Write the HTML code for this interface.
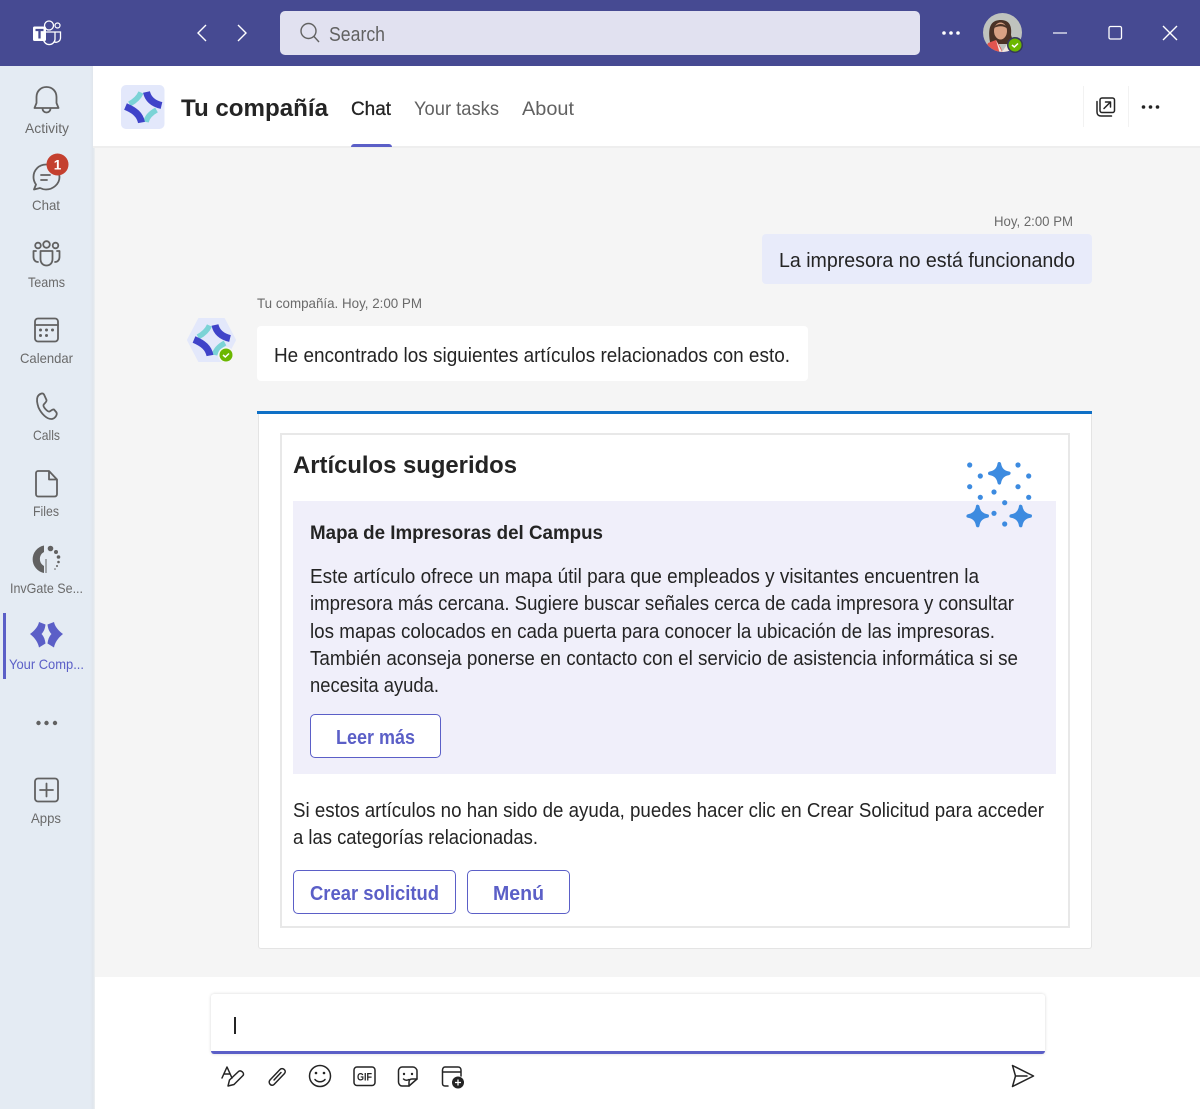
<!DOCTYPE html>
<html lang="es"><head><meta charset="utf-8"><title>Tu compañía</title>
<style>
html,body{margin:0;padding:0;width:1200px;height:1109px;overflow:hidden;background:#f5f5f5}
.b{position:absolute;box-sizing:border-box}
svg{position:absolute;left:0;top:0}
text{font-family:"Liberation Sans",sans-serif;fill:#242424;font-size:20px}
.n{font-size:14px;fill:#6a6a6a;text-anchor:start}
.i{fill:none;stroke:#616161;stroke-width:1.8;stroke-linecap:round;stroke-linejoin:round}
.k{fill:none;stroke:#242424;stroke-width:1.5;stroke-linecap:round;stroke-linejoin:round}
.bb{font-weight:700}
.p{fill:#5b5fc7;font-weight:700}
</style></head><body>
<div class="b" style="left:0;top:66px;width:95px;height:1043px;background:linear-gradient(90deg,#e4ebf3 0,#e4ebf3 90px,#dfe5ec 93px,#eef0f2 95px)"></div>
<div class="b" style="left:93px;top:66px;width:1107px;height:82px;background:#fff;border-bottom:2px solid #eeeeee"></div>
<div class="b" style="left:0;top:0;width:1200px;height:66px;background:#464a92"></div>
<div class="b" style="left:280px;top:11px;width:640px;height:44px;background:#e1e1f0;border-radius:5px"></div>
<div class="b" style="left:351px;top:144px;width:41px;height:3px;background:#5b5fc7;border-radius:3px 3px 0 0"></div>
<div class="b" style="left:762px;top:234px;width:330px;height:50px;background:#e8ebfa;border-radius:4px"></div>
<div class="b" style="left:257px;top:326px;width:551px;height:55px;background:#fff;border-radius:4px"></div>
<div class="b" style="left:258px;top:414px;width:834px;height:535px;background:#fff;border:1px solid #e4e4e4;border-top:0;border-radius:0 0 3px 3px"></div>
<div class="b" style="left:257px;top:411px;width:835px;height:3px;background:#0f70c6"></div>
<div class="b" style="left:280px;top:433px;width:790px;height:495px;background:#fff;border:2px solid #e8e8e8"></div>
<div class="b" style="left:293px;top:501px;width:763px;height:273px;background:#f0effa"></div>
<div class="b" style="left:310px;top:714px;width:131px;height:44px;background:#fff;border:1.5px solid #5b5fc7;border-radius:5px"></div>
<div class="b" style="left:293px;top:870px;width:163px;height:44px;background:#fff;border:1.5px solid #5b5fc7;border-radius:5px"></div>
<div class="b" style="left:467px;top:870px;width:103px;height:44px;background:#fff;border:1.5px solid #5b5fc7;border-radius:5px"></div>
<div class="b" style="left:95px;top:977px;width:1105px;height:132px;background:#fff"></div>
<div class="b" style="left:211px;top:994px;width:834px;height:60px;background:#fff;border-bottom:3px solid #5b5fc7;border-radius:3px;box-shadow:0 0 3px rgba(0,0,0,.16)"></div>
<div class="b" style="left:234px;top:1017px;width:1.6px;height:17px;background:#242424"></div>
<div class="b" style="left:3px;top:613px;width:3px;height:66px;background:#5b5fc7"></div>
<div class="b" style="left:1083px;top:86px;width:1px;height:41px;background:#f2f2f2"></div>
<div class="b" style="left:1128px;top:86px;width:1px;height:41px;background:#f2f2f2"></div>

<svg width="1200" height="1109" viewBox="0 0 1200 1109">
<defs>
<g id="logo" fill="none">
<path d="M20 7.500C18 12 14 16 8.500 19" stroke="#7bd3d6" stroke-width="5.500"/>
<path d="M25 37C26 32 30 28 35.500 25" stroke="#7bd3d6" stroke-width="5.500"/>
<path d="M25.500 7C27 14 32 18.500 40.500 20.500" stroke="#3f43c9" stroke-width="7"/>
<path d="M20.500 37.500C19 30 14 25.500 4.500 21.500" stroke="#3f43c9" stroke-width="7"/>
</g>
<path id="star" d="M0-9.500Q1.200-1.200 9.500 0Q1.200 1.200 0 9.500Q-1.200 1.200-9.500 0Q-1.200-1.200 0-9.500Z" fill="#3d8be0" stroke="#3d8be0" stroke-width="3.600" stroke-linejoin="round"/>
</defs>

<!-- Teams logo -->
<circle cx="49" cy="25.500" r="4.500" fill="none" stroke="#fff" stroke-width="1.300"/>
<circle cx="57.500" cy="25.500" r="2.500" fill="none" stroke="#fff" stroke-width="1.200"/>
<path d="M43.500 32V39.500A5.800 5.800 0 0 0 55 39.500V32ZM55 32H60.500V38A4.500 4.500 0 0 1 54.500 42" fill="none" stroke="#fff" stroke-width="1.300"/>
<rect x="33" y="26.500" width="13" height="14.500" rx="1.500" fill="#fff"/>
<path d="M35.500 30H43.500M39.500 30V38.500" stroke="#464a92" stroke-width="2.300" fill="none"/>

<!-- nav arrows -->
<path d="M206 25L198 33L206 41M238 25L246 33L238 41" fill="none" stroke="#fff" stroke-width="1.400"/>
<!-- search -->
<circle cx="308.500" cy="31" r="7.500" fill="none" stroke="#616161" stroke-width="1.400"/>
<path d="M314 36.500L319 42" stroke="#616161" stroke-width="1.400"/>
<text x="329" y="41" textLength="56" lengthAdjust="spacingAndGlyphs" style="fill:#616161">Search</text>
<!-- top right -->
<g fill="#fff"><circle cx="944" cy="33" r="1.800"/><circle cx="951" cy="33" r="1.800"/><circle cx="958" cy="33" r="1.800"/></g>
<clipPath id="av"><circle cx="1002.500" cy="32.500" r="19.500"/></clipPath>
<g clip-path="url(#av)">
<rect x="983" y="13" width="40" height="40" fill="#bfc3be"/>
<path d="M990 42C987 24 993 20 1001 20C1010 20 1012 27 1011 35L1014 44H990Z" fill="#4a3226"/>
<ellipse cx="1000.500" cy="31" rx="6.500" ry="8.500" fill="#d8a184"/>
<path d="M994 28C996 23 1005 22 1008 29C1003 25 998 26 994 28Z" fill="#4a3226"/>
<path d="M984 54L988 43L996 40L1001 48L1003 54Z" fill="#e2544f"/>
<path d="M996 40L1002 52L1008 43L1012 54H1000Z" fill="#f2e8e2"/>
<path d="M1008 43L1020 44V54H1012Z" fill="#2e2e36"/>
</g>
<circle cx="1015" cy="45" r="8" fill="#36385e"/>
<circle cx="1015" cy="45" r="6.500" fill="#6bb700"/>
<path d="M1012 45L1014.300 47L1018 43.500" fill="none" stroke="#fff" stroke-width="1.500"/>
<path d="M1053 33H1067" stroke="#fff" stroke-width="1.300" opacity=".9"/>
<rect x="1109" y="26.500" width="12.500" height="12.500" rx="1.500" fill="none" stroke="#fff" stroke-width="1.300"/>
<path d="M1163 26L1177 40M1177 26L1163 40" stroke="#fff" stroke-width="1.400"/>

<!-- sidebar -->
<path class="i" d="M47 87C41 87 37 91.500 37 97V103L35 108H59L57 103V97C57 91.500 53 87 47 87ZM43 108.500A4 4 0 0 0 51 108.500" transform="translate(-.5 0)"/>
<text class="n" x="25" y="133" textLength="44" lengthAdjust="spacingAndGlyphs">Activity</text>
<path class="i" d="M46 164.500C39 164.500 33.500 170 33.500 177C33.500 180 34.500 182.500 36 184.500L34 189.500L40 188C42 189 44 189.500 46 189.500C53 189.500 59.500 184 59.500 177C59.500 170 53 164.500 46 164.500Z"/>
<path class="i" d="M41 175H50M41 180H47"/>
<circle cx="57.500" cy="164.500" r="11" fill="#c4402f"/>
<text x="57.500" y="169.500" text-anchor="middle" style="fill:#fff;font-size:13.500px;font-weight:700">1</text>
<text class="n" x="32" y="210" textLength="28" lengthAdjust="spacingAndGlyphs">Chat</text>
<circle class="i" cx="38" cy="245.500" r="2.800"/><circle class="i" cx="46.500" cy="244.500" r="3.300"/><circle class="i" cx="55.500" cy="245.500" r="2.800"/>
<path class="i" d="M40.500 251H52.500V259C52.500 263 50 265.500 46.500 265.500C43 265.500 40.500 263 40.500 259Z"/>
<path class="i" d="M36 251H33.500V257C33.500 260 35.500 262 38 262M57 251H59.500V257C59.500 260 57.500 262 55 262"/>
<text class="n" x="28" y="287" textLength="37" lengthAdjust="spacingAndGlyphs">Teams</text>
<rect class="i" x="35" y="318.500" width="23" height="23" rx="3"/><path class="i" d="M35 325H58"/>
<g fill="#616161"><circle cx="40.500" cy="330" r="1.500"/><circle cx="46.500" cy="330" r="1.500"/><circle cx="52.500" cy="330" r="1.500"/><circle cx="40.500" cy="335.500" r="1.500"/><circle cx="46.500" cy="335.500" r="1.500"/></g>
<text class="n" x="20" y="363" textLength="53" lengthAdjust="spacingAndGlyphs">Calendar</text>
<path class="i" d="M37.500 397C38.500 394.500 42.500 392 44 394.500L46.500 400C47 402 44 403.500 43.500 405C43 407 47.500 412 49.500 411.500C51 411 52 409 54 409.500L56.500 412.500C57.500 415 55 418.500 52 419C47 419.500 41.500 414 38.500 407.500C37 403 36.500 399.500 37.500 397Z"/>
<text class="n" x="33" y="440" textLength="27" lengthAdjust="spacingAndGlyphs">Calls</text>
<path class="i" d="M38 471H49L57 479.500V494C57 495.500 56 496.500 54.500 496.500H38C37 496.500 36 495.500 36 494V473C36 472 37 471 38 471ZM49 471V479.500H57"/>
<text class="n" x="33" y="516" textLength="26" lengthAdjust="spacingAndGlyphs">Files</text>
<path d="M44 545.500A14 14 0 0 0 44 573V566A8 8 0 0 1 44 552Z" fill="#616161"/><path d="M46 559V573" stroke="#616161" stroke-width="1"/>
<g fill="#616161"><circle cx="50.500" cy="548.500" r="2.800"/><circle cx="56" cy="552" r="2"/><circle cx="58.500" cy="557" r="1.800"/><circle cx="58.500" cy="562" r="1.300"/><circle cx="57" cy="566" r="1"/><circle cx="55" cy="569" r=".8"/></g>
<text class="n" x="10" y="593" textLength="73" lengthAdjust="spacingAndGlyphs">InvGate Se...</text>
<path d="M30 634C34 631 38 627 39 622L45.500 624.500C45 629 43.500 632 41.500 634C43.500 636 45 639 45.500 643.500L39 647.500C38 642 34 637 30 634Z" fill="#5b5fc7"/>
<path d="M63 634C59 631 55 627 54 622L47.500 624.500C48 629 49.500 632 51.500 634C49.500 636 48 639 47.500 643.500L54 647.500C55 642 59 637 63 634Z" fill="#5b5fc7"/>
<text class="n" x="9" y="669" textLength="75" lengthAdjust="spacingAndGlyphs" style="fill:#5b5fc7">Your Comp...</text>
<g fill="#616161"><circle cx="38.500" cy="723" r="2.200"/><circle cx="46.500" cy="723" r="2.200"/><circle cx="55" cy="723" r="2.200"/></g>
<rect class="i" x="35" y="778.500" width="23" height="23" rx="3"/><path class="i" d="M46.500 783.500V796.500M40 790H53"/>
<text class="n" x="31" y="823" textLength="30" lengthAdjust="spacingAndGlyphs">Apps</text>

<!-- header -->
<rect x="121" y="85" width="43.500" height="44" rx="5" fill="#e3e8fb"/>
<use href="#logo" x="121" y="85"/>
<text x="181" y="116" textLength="147" lengthAdjust="spacingAndGlyphs" class="bb" style="font-size:24px">Tu compañía</text>
<text x="351" y="115" textLength="40" lengthAdjust="spacingAndGlyphs" style="font-size:19.500px;stroke:#242424;stroke-width:.3px">Chat</text>
<text x="414" y="115" textLength="85" lengthAdjust="spacingAndGlyphs" style="font-size:19.500px;fill:#616161">Your tasks</text>
<text x="522" y="115" textLength="52" lengthAdjust="spacingAndGlyphs" style="font-size:19.500px;fill:#616161">About</text>
<rect class="k" x="1100" y="98" width="14.500" height="14.500" rx="2"/>
<path class="k" d="M1097 101.500V112C1097 114.500 1098.500 116 1101 116H1111.500"/>
<path class="k" d="M1104 108.500L1110.500 102M1105.500 102H1110.500V107"/>
<g fill="#242424"><circle cx="1143.500" cy="107" r="1.800"/><circle cx="1150.500" cy="107" r="1.800"/><circle cx="1157.500" cy="107" r="1.800"/></g>

<!-- messages -->
<text class="n" x="994" y="226" textLength="79" lengthAdjust="spacingAndGlyphs">Hoy, 2:00 PM</text>
<text x="779" y="267" textLength="296" lengthAdjust="spacingAndGlyphs">La impresora no está funcionando</text>
<text class="n" x="257" y="308" textLength="165" lengthAdjust="spacingAndGlyphs">Tu compañía. Hoy, 2:00 PM</text>
<path d="M199 319H224L235 340L224 361H199L188 340Z" fill="#e3e8fb" stroke="#e3e8fb" stroke-width="2" stroke-linejoin="round"/>
<use href="#logo" x="189.500" y="318"/>
<circle cx="226" cy="355" r="8" fill="#f5f5f5"/><circle cx="226" cy="355" r="6.500" fill="#6bb700"/>
<path d="M223 355L225.300 357L229 353.500" fill="none" stroke="#fff" stroke-width="1.500"/>
<text x="274" y="362" textLength="516" lengthAdjust="spacingAndGlyphs">He encontrado los siguientes artículos relacionados con esto.</text>

<!-- card -->
<text x="293" y="473" textLength="224" lengthAdjust="spacingAndGlyphs" class="bb" style="font-size:24.500px">Artículos sugeridos</text>
<use href="#star" x="999.300" y="473.300"/><use href="#star" x="977.700" y="516"/><use href="#star" x="1020.700" y="516"/>
<g fill="#3d8be0"><circle cx="969.700" cy="465" r="2.600"/><circle cx="980.300" cy="476" r="2.600"/><circle cx="1018" cy="465" r="2.600"/><circle cx="1028.700" cy="476" r="2.600"/><circle cx="969.700" cy="486.700" r="2.600"/><circle cx="980.300" cy="497.300" r="2.600"/><circle cx="994" cy="492" r="2.600"/><circle cx="1018" cy="486.700" r="2.600"/><circle cx="1028.700" cy="497.300" r="2.600"/><circle cx="1004.700" cy="502.700" r="2.600"/><circle cx="994" cy="513.300" r="2.600"/><circle cx="1004.700" cy="524" r="2.600"/></g>
<text x="310" y="539" textLength="293" lengthAdjust="spacingAndGlyphs" class="bb" style="font-size:19.500px">Mapa de Impresoras del Campus</text>
<text x="310" y="583" textLength="669" lengthAdjust="spacingAndGlyphs">Este artículo ofrece un mapa útil para que empleados y visitantes encuentren la</text>
<text x="310" y="610" textLength="704" lengthAdjust="spacingAndGlyphs">impresora más cercana. Sugiere buscar señales cerca de cada impresora y consultar</text>
<text x="310" y="638" textLength="685" lengthAdjust="spacingAndGlyphs">los mapas colocados en cada puerta para conocer la ubicación de las impresoras.</text>
<text x="310" y="665" textLength="708" lengthAdjust="spacingAndGlyphs">También aconseja ponerse en contacto con el servicio de asistencia informática si se</text>
<text x="310" y="692" textLength="129" lengthAdjust="spacingAndGlyphs">necesita ayuda.</text>
<text x="336" y="744" textLength="79" lengthAdjust="spacingAndGlyphs" class="p">Leer más</text>
<text x="293" y="817" textLength="751" lengthAdjust="spacingAndGlyphs">Si estos artículos no han sido de ayuda, puedes hacer clic en Crear Solicitud para acceder</text>
<text x="293" y="844" textLength="245" lengthAdjust="spacingAndGlyphs">a las categorías relacionadas.</text>
<text x="310" y="900" textLength="129" lengthAdjust="spacingAndGlyphs" class="p">Crear solicitud</text>
<text x="493" y="900" textLength="51" lengthAdjust="spacingAndGlyphs" class="p">Menú</text>

<!-- compose toolbar -->
<path class="k" d="M222 1078L227 1067L232 1078M224 1074H230"/>
<path class="k" d="M228 1086L229.500 1080L238.500 1071.500C240.500 1069.500 245 1073 243 1075.500L234 1084.500Z"/>
<path class="k" d="M270 1080L280 1069.500C282.500 1067 287 1070.500 284.500 1073.500L274 1084.500C271.500 1087 267.500 1083 270 1080ZM274 1080L281 1072.500"/>
<circle class="k" cx="320" cy="1076" r="10.500"/>
<circle cx="316" cy="1073" r="1.300" fill="#242424"/><circle cx="324" cy="1073" r="1.300" fill="#242424"/>
<path class="k" d="M315 1079.500C317.500 1082.500 322.500 1082.500 325 1079.500"/>
<rect class="k" x="354" y="1067" width="21" height="18.500" rx="3"/>
<text x="357" y="1080.500" textLength="15" lengthAdjust="spacingAndGlyphs" class="bb" style="font-size:11px">GIF</text>
<path class="k" d="M402 1067H413C415 1067 417 1069 417 1071V1079L409 1086H402C400 1086 398.500 1084 398.500 1082V1071C398.500 1069 400 1067 402 1067Z"/>
<path class="k" d="M417 1079H412C410 1079 409 1080.500 409 1082V1086M403.500 1079C405 1080.500 407 1080.500 409 1079.500"/>
<circle cx="404" cy="1074" r="1.200" fill="#242424"/><circle cx="412" cy="1074" r="1.200" fill="#242424"/>
<path class="k" d="M448 1086H445C443.500 1086 442.500 1085 442.500 1083.500V1070C442.500 1068.500 443.500 1067 445 1067H458C460 1067 461 1068.500 461 1070V1076M442.500 1072H461"/>
<circle cx="458" cy="1082.500" r="6" fill="#242424"/><path d="M458 1079.500V1085.500M455 1082.500H461" stroke="#fff" stroke-width="1.300"/>
<path class="k" d="M1012.500 1065.500L1033.500 1076L1012.500 1086.500L1015.500 1076ZM1015.500 1076H1027"/>
</svg>
</body></html>
